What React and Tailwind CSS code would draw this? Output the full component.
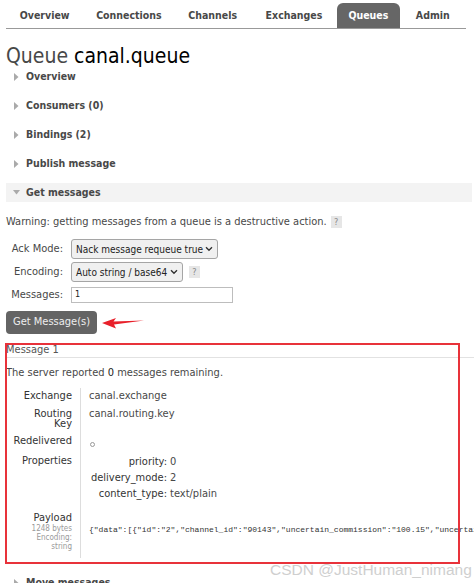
const tabs = [
  { name: "Overview", w: "w-[78px]" },
  { name: "Connections", w: "w-[92px]" },
  { name: "Channels", w: "w-[77px]" },
  { name: "Exchanges", w: "w-[87px]" },
  { name: "Queues", w: "w-[63px]", active: true },
  { name: "Admin", w: "w-[67px]" },
];

const sections = ["Overview", "Consumers (0)", "Bindings (2)", "Publish message"];

function Tri({ open }) {
  return open ? (
    <svg width="7" height="5" viewBox="0 0 7 5" className="shrink-0">
      <polygon points="0,0 7,0 3.5,4.5" fill="#aaa" />
    </svg>
  ) : (
    <svg width="5" height="8" viewBox="0 0 5 8" className="shrink-0">
      <polygon points="0,0 4.5,4 0,8" fill="#aaa" />
    </svg>
  );
}

function Chevron() {
  return (
    <svg width="8" height="6" viewBox="0 0 8 6" className="shrink-0">
      <path d="M1 1.2 L4 4.2 L7 1.2" fill="none" stroke="#333" strokeWidth="1.4" />
    </svg>
  );
}

function Help() {
  return (
    <span className="inline-flex items-center justify-center w-[11px] h-[12px] bg-[#e6e6e6] text-[#888] text-[9px] leading-none">
      ?
    </span>
  );
}

export default function App() {
  return (
    <div className="relative w-[474px] h-[583px] overflow-hidden bg-white font-['DejaVu_Sans_Condensed','DejaVu_Sans',sans-serif] text-[#484848]">
      {/* NAV */}
      <div className="pt-[3px] px-[6px]">
        <ul className="flex h-[26px] w-[460px] border-b border-[#999]">
          {tabs.map((t) => (
            <li
              key={t.name}
              className={`${t.w} flex items-center justify-center text-[10.5px] font-bold ${
                t.active ? "bg-[#666] text-white rounded-t-[6px]" : "text-[#484848]"
              }`}
            >
              {t.name}
            </li>
          ))}
        </ul>
      </div>

      <div className="px-[6px]">
        {/* TITLE */}
        <h1 className="mt-[16px] h-[22px] leading-[22px] text-[21px] text-[#484848] whitespace-nowrap">
          Queue <span className="text-black">canal.queue</span>
        </h1>

        {/* SECTIONS */}
        <div className="flex flex-col gap-[10px]">
          {sections.map((s) => (
            <div key={s} className="h-[19px] flex items-center gap-[7px] pl-[8px] text-[10.5px] font-bold">
              <Tri />
              {s}
            </div>
          ))}
          <div className="h-[19px] w-[466px] flex items-center gap-[6px] pl-[7px] bg-[#f3f3f3] text-[10.5px] font-bold">
            <Tri open />
            Get messages
          </div>
        </div>

        {/* GET MESSAGES FORM */}
        <div className="mt-[13px] flex items-center gap-[4px] h-[14px] text-[11px] whitespace-nowrap">
          Warning: getting messages from a queue is a destructive action. <Help />
        </div>

        <div className="mt-[10px] flex flex-col text-[11px]">
          <div className="flex items-center gap-[8px] h-[20px]">
            <span className="w-[57px] text-right whitespace-nowrap">Ack Mode:</span>
            <div className="w-[147px] h-[20px] flex items-center justify-between px-[4px] border border-[#a5a5a5] rounded-[3px] bg-[#f0f0f0] text-[#222] text-[10px] whitespace-nowrap overflow-hidden">
              Nack message requeue true <Chevron />
            </div>
          </div>
          <div className="mt-[3px] flex items-center gap-[8px] h-[20px]">
            <span className="w-[57px] text-right whitespace-nowrap">Encoding:</span>
            <div className="w-[112px] h-[20px] flex items-center justify-between px-[4px] border border-[#a5a5a5] rounded-[3px] bg-[#f0f0f0] text-[#222] text-[10px] whitespace-nowrap overflow-hidden">
              Auto string / base64 <Chevron />
            </div>
            <span className="-ml-[2px]"><Help /></span>
          </div>
          <div className="mt-[5px] flex items-center gap-[8px] h-[16px]">
            <span className="w-[57px] text-right whitespace-nowrap">Messages:</span>
            <div className="w-[162px] h-[16px] flex items-center px-[3px] border border-[#bdbdbd] text-[9px] text-[#222]">
              1
            </div>
          </div>
        </div>

        <button className="mt-[8px] w-[91px] h-[23px] rounded-[4px] bg-[#646464] text-[#eee] text-[11px] flex items-center justify-center">
          Get Message(s)
        </button>

        {/* MESSAGE */}
        <div className="mt-[9px] h-[15px] leading-[14px] border-b border-[#e2e2e2] -mr-[6px] text-[11px] text-[#555]">
          Message 1
        </div>
        <p className="mt-[8px] h-[14px] leading-[14px] text-[11px] whitespace-nowrap">
          The server reported <span className="text-[#222]">0</span> messages remaining.
        </p>

        <div className="mt-[8px] grid grid-cols-[74px_1fr] text-[11px]">
          {/* Exchange */}
          <div className="pt-[1px] pb-[4px] pr-[8px] leading-[14px] text-right text-[#333]">Exchange</div>
          <div className="pt-[1px] pb-[4px] pl-[8px] leading-[14px] border-l border-[#ddd]">canal.exchange</div>

          {/* Routing key */}
          <div className="pt-[2px] pb-[5px] pr-[8px] leading-[10px] text-right text-[#333]">
            Routing
            <br />
            Key
          </div>
          <div className="pb-[5px] pl-[8px] leading-[14px] border-l border-[#ddd]">canal.routing.key</div>

          {/* Redelivered */}
          <div className="pb-[6px] pr-[8px] leading-[14px] text-right text-[#333]">Redelivered</div>
          <div className="pb-[6px] pl-[9px] pt-[8px] border-l border-[#ddd]">
            <div className="w-[5px] h-[5px] rounded-full border border-[#999]" />
          </div>

          {/* Properties */}
          <div className="pr-[8px] leading-[14px] text-right text-[#333]">Properties</div>
          <div className="pl-[2px] border-l border-[#ddd]">
            <div className="grid grid-cols-[84px_1fr] gap-x-[3px] leading-[16px]">
              <span className="text-right text-[#333]">priority:</span>
              <span>0</span>
              <span className="text-right text-[#333]">delivery_mode:</span>
              <span>2</span>
              <span className="text-right text-[#333]">content_type:</span>
              <span>text/plain</span>
            </div>
          </div>

          {/* Payload */}
          <div className="pt-[10px] pb-[7px] pr-[8px] text-right">
            <div className="leading-[12px] text-[#333]">Payload</div>
            <div className="leading-[9px] text-[8px] text-[#9a9a9a]">
              1248 bytes
              <br />
              Encoding:
              <br />
              string
            </div>
          </div>
          <div className="pt-[22px] pl-[8px] border-l border-[#ddd] whitespace-nowrap font-['Liberation_Mono',monospace] text-[8px] leading-[12px] text-[#333]">
            {'{"data":[{"id":"2","channel_id":"90143","uncertain_commission":"100.15","uncertain_amount":"1200.00"}]}'}
          </div>
        </div>

        <div className="mt-[15px] h-[19px] flex items-center gap-[7px] pl-[8px] text-[10.5px] font-bold">
          <Tri />
          Move messages
        </div>
      </div>

      {/* annotation overlay: arrow + red frame + watermark */}
      <svg width="46" height="16" viewBox="0 0 46 16" className="absolute left-[100px] top-[314px]">
        <polygon points="2,9 16,4 13.5,7.5 44,6.5 14,10.5 16,14.5" fill="#e8202a" />
      </svg>
      <div className="absolute left-[5px] top-[343px] w-[455px] h-[221px] border-2 border-[#e8323a]" />
      <div className="absolute left-[270px] top-[561px] font-['Liberation_Sans',sans-serif] text-[15.5px] leading-[18px] text-[#cfcfcf] whitespace-nowrap">
        CSDN @JustHuman_nimang
      </div>
    </div>
  );
}
